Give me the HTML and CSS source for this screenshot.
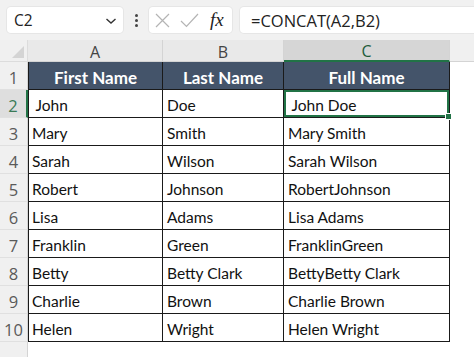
FILE: index.html
```html
<!DOCTYPE html>
<html>
<head>
<meta charset="utf-8">
<link rel="stylesheet" href="styles.css">
</head>
<body>
<div class="toolbar">
  <div class="namebox">
    <span>C2</span>
    <svg class="chev" width="12" height="8" viewBox="0 0 12 8"><path d="M1.5 2 L6 6 L10.5 2" fill="none" stroke="#333" stroke-width="1.4"/></svg>
  </div>
  <div class="dots"><i></i><i></i><i></i></div>
  <div class="fnbox">
    <svg width="15" height="15" viewBox="0 0 15 15"><path d="M1 1 L14 14 M14 1 L1 14" stroke="#b4b4b4" stroke-width="1.2" fill="none"/></svg>
    <svg width="19" height="15" viewBox="0 0 19 15"><path d="M1 8 L6.5 13.5 L18 1" stroke="#b4b4b4" stroke-width="1.2" fill="none"/></svg>
    <span class="fx">fx</span>
  </div>
  <div class="formula">=CONCAT(A2,B2)</div>
</div>
<div class="sheet">
  <div class="corner"></div>
  <div class="colh">A</div>
  <div class="colh">B</div>
  <div class="colh sel">C</div>
  <div class="colh rest"></div>

  <div class="rowh">1</div>
  <div class="cell hd first">First Name</div>
  <div class="cell hd">Last Name</div>
  <div class="cell hd">Full Name</div>
  <div class="blank"></div>

  <div class="rowh sel">2</div>
  <div class="cell first">&nbsp;John</div>
  <div class="cell">Doe</div>
  <div class="cell active">&nbsp;John Doe<span class="handle"></span></div>
  <div class="blank"></div>

  <div class="rowh">3</div>
  <div class="cell first">Mary</div>
  <div class="cell">Smith</div>
  <div class="cell">Mary Smith</div>
  <div class="blank"></div>

  <div class="rowh">4</div>
  <div class="cell first">Sarah</div>
  <div class="cell">Wilson</div>
  <div class="cell">Sarah Wilson</div>
  <div class="blank"></div>

  <div class="rowh">5</div>
  <div class="cell first">Robert</div>
  <div class="cell">Johnson</div>
  <div class="cell">RobertJohnson</div>
  <div class="blank"></div>

  <div class="rowh">6</div>
  <div class="cell first">Lisa</div>
  <div class="cell">Adams</div>
  <div class="cell">Lisa Adams</div>
  <div class="blank"></div>

  <div class="rowh">7</div>
  <div class="cell first">Franklin</div>
  <div class="cell">Green</div>
  <div class="cell">FranklinGreen</div>
  <div class="blank"></div>

  <div class="rowh">8</div>
  <div class="cell first">Betty</div>
  <div class="cell">Betty Clark</div>
  <div class="cell">BettyBetty Clark</div>
  <div class="blank"></div>

  <div class="rowh">9</div>
  <div class="cell first">Charlie</div>
  <div class="cell">Brown</div>
  <div class="cell">Charlie Brown</div>
  <div class="blank"></div>

  <div class="rowh">10</div>
  <div class="cell first">Helen</div>
  <div class="cell">Wright</div>
  <div class="cell">Helen Wright</div>
  <div class="blank"></div>

  <div class="rowh last"></div>
  <div class="blank"></div>
  <div class="blank"></div>
  <div class="blank"></div>
  <div class="blank"></div>
</div>
</body>
</html>
```

FILE: styles.css
```css
* { box-sizing: border-box; }
html, body { margin: 0; padding: 0; background: #fff; }
body { width: 474px; height: 357px; overflow: hidden; font-family: "Open Sans", "Liberation Sans", sans-serif; }

.toolbar {
  height: 40px;
  background: #f1f1f1;
  display: flex;
  align-items: flex-start;
  padding: 7px 0 0 7px;
}
.namebox {
  width: 116px;
  height: 26px;
  background: #fff;
  border-radius: 4px;
  box-shadow: 0 0 0 1px #e6e6e6;
  display: flex;
  align-items: center;
  justify-content: space-between;
  padding: 0 6px 0 7px;
  font-size: 15.5px;
  color: #222;
}
.chev { margin-top: 1px; }
.dots {
  width: 26px;
  height: 26px;
  display: flex;
  flex-direction: column;
  align-items: center;
  justify-content: center;
  gap: 2px;
}
.dots i { width: 3px; height: 3px; border-radius: 50%; background: #444; display: block; }
.fnbox {
  width: 83px;
  height: 26px;
  background: #fff;
  border-radius: 4px;
  box-shadow: 0 0 0 1px #e6e6e6;
  display: flex;
  align-items: center;
  padding: 0 3px 0 6px;
  gap: 10px;
}
.fx {
  font-family: "Liberation Serif", "DejaVu Serif", serif;
  font-style: italic;
  font-size: 19px;
  color: #222;
  margin-left: 1px;
}
.formula {
  margin-left: 8px;
  flex: 1;
  height: 26px;
  background: #fff;
  border-radius: 4px 0 0 4px;
  box-shadow: 0 0 0 1px #e6e6e6;
  display: flex;
  align-items: center;
  padding-left: 11px;
  font-size: 16.5px;
  color: #222;
}

.sheet {
  display: grid;
  grid-template-columns: 28px 135px 121px 166px 1fr;
  grid-template-rows: 22px repeat(10, 28px) 1fr;
  height: 317px;
  font-family: "Lato", "Liberation Sans", sans-serif;
  font-size: 15.5px;
  color: #111;
}
.corner {
  background: #f0f0f0;
  border-right: 1px solid #dcdcdc;
  border-bottom: 1px solid #dcdcdc;
  position: relative;
}
.corner::after {
  content: "";
  position: absolute;
  right: 3px;
  bottom: 3px;
  width: 0; height: 0;
  border-left: 12px solid transparent;
  border-bottom: 12px solid #d4d4d4;
}
.colh {
  background: #e9e9e9;
  border-right: 1px solid #d4d4d4;
  border-bottom: 1px solid #d4d4d4;
  display: flex;
  align-items: center;
  justify-content: center;
  padding-top: 2px;
  font-family: "Open Sans", sans-serif;
  font-size: 16px;
  color: #444;
}
.colh.sel {
  background: #d6d6d6;
  border-bottom: 2px solid #217346;
  color: #1e5c3a;
}
.colh.rest { border-right: none; background: #f0f0f0; }

.rowh {
  background: #f0f0f0;
  border-right: 1px solid #d4d4d4;
  border-bottom: 1px solid #e0e0e0;
  display: flex;
  align-items: center;
  justify-content: center;
  padding-top: 4px;
  font-family: "Open Sans", sans-serif;
  font-size: 16.5px;
  color: #5a5a5a;
}
.rowh.sel {
  background: #dedede;
  border-right: 2px solid #217346;
  color: #3a7a56;
}
.rowh.last { border-bottom: none; }

.cell {
  border-right: 1px solid #1a1a1a;
  border-bottom: 1px solid #1a1a1a;
  display: flex;
  align-items: center;
  padding: 3px 0 0 4px;
  white-space: nowrap;
  position: relative;
}
.cell.first { border-left: 1px solid #1a1a1a; padding-left: 3px; }
.cell.hd {
  background: #44546a;
  color: #fff;
  font-weight: bold;
  font-size: 17px;
  justify-content: center;
  padding-left: 0;
}
.cell.active {
  box-shadow: inset 0 0 0 2px #217346;
}
.handle {
  position: absolute;
  right: -3px;
  bottom: -3px;
  width: 5px;
  height: 5px;
  background: #217346;
  border: 1px solid #fff;
  box-sizing: content-box;
  z-index: 2;
}
.blank { background: #fff; }
```
